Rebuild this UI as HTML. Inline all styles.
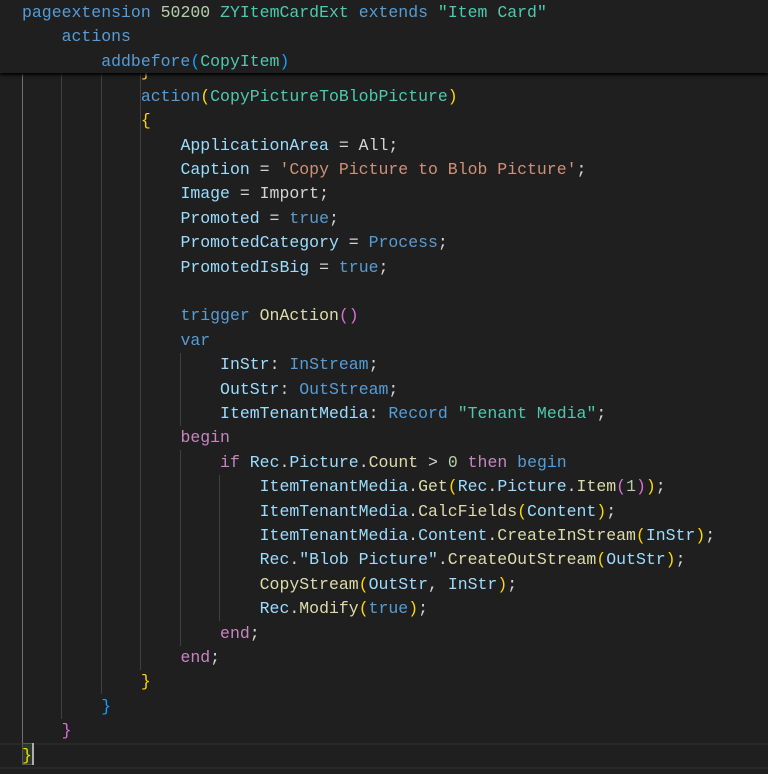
<!DOCTYPE html>
<html><head><meta charset="utf-8"><style>
html,body{margin:0;padding:0;background:#1f1f1f;width:768px;height:774px;overflow:hidden}
.ed{position:relative;width:768px;height:774px;font-family:"Liberation Mono",monospace;font-size:16.5px;color:#d4d4d4}
.l{position:absolute;left:22px;height:24.4px;line-height:24.4px;white-space:pre}
.g{position:absolute;width:1px;background:#404040}
.k{color:#569cd6}.p{color:#c586c0}.v{color:#9cdcfe}.t{color:#4ec9b0}.s{color:#ce9178}.n{color:#b5cea8}.f{color:#dcdcaa}
.b1{color:#ffd700}.b2{color:#da70d6}.b3{color:#179fff}
.sticky{position:absolute;left:0;top:0;width:768px;height:73px;background:#1f1f1f;box-shadow:0 2px 3px #000;z-index:2;overflow:hidden}
.cur{position:absolute;left:0;top:743px;width:768px;height:22px;border-top:2px solid #282828;border-bottom:2px solid #282828}
</style></head><body><div class="ed">
<div class="cur"></div>
<div class="g" style="left:22px;top:73px;height:670px;background:#707070"></div>
<div class="g" style="left:61px;top:73px;height:646px"></div>
<div class="g" style="left:101px;top:73px;height:621px"></div>
<div class="g" style="left:140px;top:73px;height:597px"></div>
<div class="g" style="left:180px;top:353px;height:73px"></div>
<div class="g" style="left:180px;top:450px;height:196px"></div>
<div class="g" style="left:219px;top:475px;height:146px"></div>
<div style="position:absolute;left:22px;top:743px;width:11px;height:22px;border:1px solid #555;background:#2a3a2a;box-sizing:border-box"></div>
<div style="position:absolute;left:32px;top:743px;width:2px;height:22px;background:#aeafad"></div>

<div class="l" style="top:60.4px"><span class="b1">            }</span></div>
<div class="l" style="top:84.8px">            <span class="k">action</span><span class="b1">(</span><span class="t">CopyPictureToBlobPicture</span><span class="b1">)</span></div>
<div class="l" style="top:109.2px">            <span class="b1">{</span></div>
<div class="l" style="top:133.6px">                <span class="v">ApplicationArea</span> = All;</div>
<div class="l" style="top:158px">                <span class="v">Caption</span> = <span class="s">'Copy Picture to Blob Picture'</span>;</div>
<div class="l" style="top:182.4px">                <span class="v">Image</span> = Import;</div>
<div class="l" style="top:206.8px">                <span class="v">Promoted</span> = <span class="k">true</span>;</div>
<div class="l" style="top:231.2px">                <span class="v">PromotedCategory</span> = <span class="k">Process</span>;</div>
<div class="l" style="top:255.6px">                <span class="v">PromotedIsBig</span> = <span class="k">true</span>;</div>
<div class="l" style="top:304.4px">                <span class="k">trigger</span> <span class="f">OnAction</span><span class="b2">()</span></div>
<div class="l" style="top:328.8px">                <span class="k">var</span></div>
<div class="l" style="top:353.2px">                    <span class="v">InStr</span>: <span class="k">InStream</span>;</div>
<div class="l" style="top:377.6px">                    <span class="v">OutStr</span>: <span class="k">OutStream</span>;</div>
<div class="l" style="top:402px">                    <span class="v">ItemTenantMedia</span>: <span class="k">Record</span> <span class="t">"Tenant Media"</span>;</div>
<div class="l" style="top:426.4px">                <span class="p">begin</span></div>
<div class="l" style="top:450.8px">                    <span class="p">if</span> <span class="v">Rec</span>.<span class="v">Picture</span>.<span class="f">Count</span> &gt; <span class="n">0</span> <span class="p">then</span> <span class="k">begin</span></div>
<div class="l" style="top:475.2px">                        <span class="v">ItemTenantMedia</span>.<span class="f">Get</span><span class="b1">(</span><span class="v">Rec</span>.<span class="v">Picture</span>.<span class="f">Item</span><span class="b2">(</span><span class="n">1</span><span class="b2">)</span><span class="b1">)</span>;</div>
<div class="l" style="top:499.6px">                        <span class="v">ItemTenantMedia</span>.<span class="f">CalcFields</span><span class="b1">(</span><span class="v">Content</span><span class="b1">)</span>;</div>
<div class="l" style="top:524px">                        <span class="v">ItemTenantMedia</span>.<span class="v">Content</span>.<span class="f">CreateInStream</span><span class="b1">(</span><span class="v">InStr</span><span class="b1">)</span>;</div>
<div class="l" style="top:548.4px">                        <span class="v">Rec</span>.<span class="v">"Blob Picture"</span>.<span class="f">CreateOutStream</span><span class="b1">(</span><span class="v">OutStr</span><span class="b1">)</span>;</div>
<div class="l" style="top:572.8px">                        <span class="f">CopyStream</span><span class="b1">(</span><span class="v">OutStr</span>, <span class="v">InStr</span><span class="b1">)</span>;</div>
<div class="l" style="top:597.2px">                        <span class="v">Rec</span>.<span class="f">Modify</span><span class="b1">(</span><span class="k">true</span><span class="b1">)</span>;</div>
<div class="l" style="top:621.6px">                    <span class="p">end</span>;</div>
<div class="l" style="top:646px">                <span class="p">end</span>;</div>
<div class="l" style="top:670.4px">            <span class="b1">}</span></div>
<div class="l" style="top:694.8px">        <span class="b3">}</span></div>
<div class="l" style="top:719.2px">    <span class="b2">}</span></div>
<div class="l" style="top:743.6px"><span class="b1">}</span></div>

<div class="sticky">
<div class="l" style="top:0.8px"><span class="k">pageextension</span> <span class="n">50200</span> <span class="t">ZYItemCardExt</span> <span class="k">extends</span> <span class="t">"Item Card"</span></div>
<div class="l" style="top:25.2px">    <span class="k">actions</span></div>
<div class="l" style="top:49.6px">        <span class="k">addbefore</span><span class="b3">(</span><span class="t">CopyItem</span><span class="b3">)</span></div>
</div>
</div></body></html>
